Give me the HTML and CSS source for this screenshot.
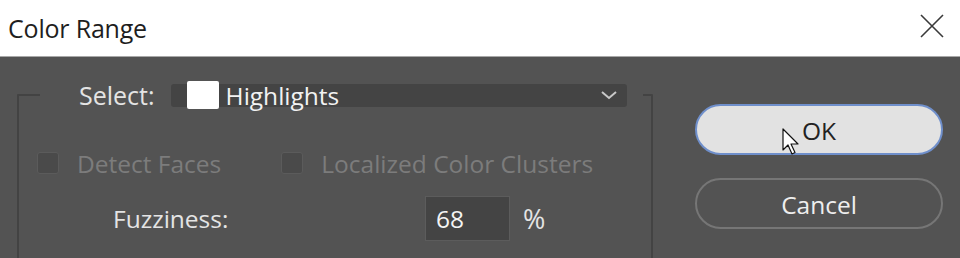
FILE: index.html
```html
<!DOCTYPE html>
<html>
<head>
<meta charset="utf-8">
<link rel="stylesheet" href="styles.css">
</head>
<body>
<div class="titlebar">
  <div class="title">Color Range</div>
  <svg class="close" width="24" height="24" viewBox="0 0 24 24"><path d="M1 1 L23 23 M23 1 L1 23" stroke="#3a3a3a" stroke-width="1.6" fill="none"/></svg>
</div>
<div class="main">
  <fieldset class="group">
    <legend class="select-row">
      <span class="label sel-label">Select:</span>
      <div class="dropdown">
        <span class="swatch"></span>
        <span class="dd-text">Highlights</span>
        <svg class="chev" width="18" height="10" viewBox="0 0 18 10"><path d="M2 2 L9 8 L16 2" stroke="#c8c8c8" stroke-width="2" fill="none"/></svg>
      </div>
    </legend>
    <div class="checks">
      <span class="box"></span><span class="dis">Detect Faces</span>
      <span class="box box2"></span><span class="dis">Localized Color Clusters</span>
    </div>
    <div class="fuzz">
      <span class="label fuzz-label">Fuzziness:</span>
      <div class="num">68</div>
      <span class="label pct">%</span>
    </div>
  </fieldset>
  <div class="buttons">
    <div class="btn ok">OK
      <svg class="cursor" width="19" height="28" viewBox="0 0 19 28"><path d="M1 1 L1 22 L6 17 L10 26 L13 24.5 L9 16 L16 16 Z" fill="#ffffff" stroke="#111" stroke-width="1.2" stroke-linejoin="round"/></svg>
    </div>
    <div class="btn cancel">Cancel</div>
  </div>
</div>
</body>
</html>
```
FILE: styles.css
```css
html, body {
  margin: 0;
  padding: 0;
  width: 960px;
  height: 258px;
  overflow: hidden;
  background: #535353;
  font-family: "Open Sans", "Noto Sans", "DejaVu Sans", sans-serif;
}
.titlebar {
  height: 56px;
  background: #ffffff;
  border-bottom: 1px solid #a8a8a8;
  display: flex;
  align-items: center;
  justify-content: space-between;
  padding: 0 16px 0 8px;
}
.title {
  font-size: 25px;
  color: #1e1e1e;
  letter-spacing: -0.2px;
}
.close {
  margin-top: -4px;
}
.main {
  display: flex;
  align-items: flex-start;
}
.group {
  margin: 24px 0 0 17px;
  width: 636px;
  height: 200px;
  padding: 0 0 0 18px;
  border: 2px solid #434343;
  border-radius: 1px;
  box-sizing: border-box;
}
.select-row {
  display: flex;
  align-items: center;
  height: 28px;
  padding: 0 16px 0 39px;
  margin-left: 3px;
}
.label {
  font-size: 24.5px;
  color: #e4e4e4;
}
.sel-label {
  font-size: 25px;
}
.dropdown {
  margin-left: 16px;
  width: 456px;
  height: 23px;
  background: #444444;
  border-radius: 3px;
  display: flex;
  align-items: center;
  padding-left: 16px;
  box-sizing: border-box;
  position: relative;
}
.swatch {
  width: 32px;
  height: 28px;
  background: #ffffff;
  border-radius: 2px;
  flex: none;
}
.dd-text {
  margin-left: 7px;
  font-size: 24.5px;
  color: #f2f2f2;
  flex: 1;
}
.chev {
  margin-right: 9px;
}
.checks {
  display: flex;
  align-items: center;
  margin-top: 42px;
  height: 24px;
}
.box {
  width: 20px;
  height: 20px;
  background: #4a4a4a;
  border: 1px solid #5b5b5b;
  border-radius: 3px;
  flex: none;
  margin-right: 18px;
}
.box2 {
  margin-left: 60px;
}
.dis {
  font-size: 24.5px;
  color: #7c7c7c;
}
.fuzz {
  display: flex;
  align-items: center;
  margin-top: 21px;
}
.fuzz-label {
  margin-left: 76px;
  width: 312px;
}
.num {
  width: 85px;
  height: 45px;
  box-sizing: border-box;
  background: #444444;
  border: 1px solid #5c5c5c;
  font-size: 24.5px;
  color: #f4f4f4;
  display: flex;
  align-items: center;
  padding-left: 10px;
}
.pct {
  margin-left: 13px;
  font-size: 27px;
}
.buttons {
  margin: 47px 0 0 42px;
  display: flex;
  flex-direction: column;
  gap: 23px;
}
.btn {
  width: 248px;
  height: 51px;
  box-sizing: border-box;
  border-radius: 26px;
  display: flex;
  align-items: center;
  justify-content: center;
  font-size: 24.5px;
  position: relative;
  padding-top: 2px;
}
.ok {
  background: #e2e2e2;
  border: 2px solid #6f8fcb;
  color: #222222;
}
.cancel {
  border: 2px solid #767676;
  color: #eeeeee;
}
.cursor {
  position: absolute;
  left: 85px;
  top: 22px;
}
```
